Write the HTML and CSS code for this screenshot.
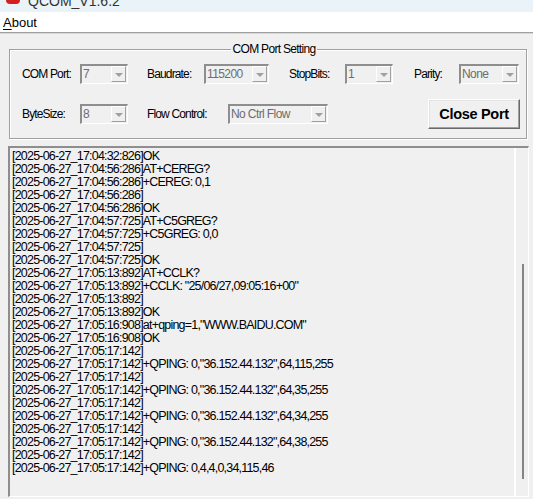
FILE: index.html
```html
<!DOCTYPE html>
<html lang="en">
<head>
    <meta charset="UTF-8">
    <title>QCOM_V1.6.2</title>
    <link rel="stylesheet" href="styles.css">
</head>
<body>
    <div class="titlebar">
        <span class="app-icon"></span>
        <span class="title-text">QCOM_V1.6.2</span>
    </div>
    <div class="menubar">
        <span class="menu-item"><u>A</u>bout</span>
    </div>

    <fieldset class="group">
        <legend>COM Port Setting</legend>
        <div class="row row-one">
            <span class="lbl lbl-port">COM Port:</span>
            <div class="combo w48"><span class="val">7</span><span class="drop"></span></div>
            <span class="lbl lbl-baud">Baudrate:</span>
            <div class="combo w65"><span class="val">115200</span><span class="drop"></span></div>
            <span class="lbl lbl-stop">StopBits:</span>
            <div class="combo w48"><span class="val">1</span><span class="drop"></span></div>
            <span class="lbl lbl-parity">Parity:</span>
            <div class="combo w60"><span class="val">None</span><span class="drop"></span></div>
        </div>
        <div class="row row-two">
            <span class="lbl lbl-port">ByteSize:</span>
            <div class="combo w48"><span class="val">8</span><span class="drop"></span></div>
            <span class="lbl lbl-flow">Flow Control:</span>
            <div class="combo w100"><span class="val">No Ctrl Flow</span><span class="drop"></span></div>
            <button class="port-btn">Close Port</button>
        </div>
    </fieldset>

    <div class="log">
        <div class="log-text" id="logText"></div>
        <div class="scroll">
            <div class="thumb"></div>
        </div>
    </div>

    <script>
        const lines = [
            '[2025-06-27_17:04:32:826]OK',
            '[2025-06-27_17:04:56:286]AT+CEREG?',
            '[2025-06-27_17:04:56:286]+CEREG: 0,1',
            '[2025-06-27_17:04:56:286]',
            '[2025-06-27_17:04:56:286]OK',
            '[2025-06-27_17:04:57:725]AT+C5GREG?',
            '[2025-06-27_17:04:57:725]+C5GREG: 0,0',
            '[2025-06-27_17:04:57:725]',
            '[2025-06-27_17:04:57:725]OK',
            '[2025-06-27_17:05:13:892]AT+CCLK?',
            '[2025-06-27_17:05:13:892]+CCLK: "25/06/27,09:05:16+00"',
            '[2025-06-27_17:05:13:892]',
            '[2025-06-27_17:05:13:892]OK',
            '[2025-06-27_17:05:16:908]at+qping=1,"WWW.BAIDU.COM"',
            '[2025-06-27_17:05:16:908]OK',
            '[2025-06-27_17:05:17:142]',
            '[2025-06-27_17:05:17:142]+QPING: 0,"36.152.44.132",64,115,255',
            '[2025-06-27_17:05:17:142]',
            '[2025-06-27_17:05:17:142]+QPING: 0,"36.152.44.132",64,35,255',
            '[2025-06-27_17:05:17:142]',
            '[2025-06-27_17:05:17:142]+QPING: 0,"36.152.44.132",64,34,255',
            '[2025-06-27_17:05:17:142]',
            '[2025-06-27_17:05:17:142]+QPING: 0,"36.152.44.132",64,38,255',
            '[2025-06-27_17:05:17:142]',
            '[2025-06-27_17:05:17:142]+QPING: 0,4,4,0,34,115,46'
        ];

        const logText = document.getElementById('logText');
        lines.forEach(line => {
            const row = document.createElement('div');
            row.className = 'line';
            row.textContent = line;
            logText.appendChild(row);
        });
    </script>
</body>
</html>
```

FILE: styles.css
```css
body {
    margin: 0;
    background-color: #f0f0f0;
    font-family: "Liberation Sans", Arial, sans-serif;
    color: #000;
    width: 533px;
    height: 499px;
    overflow: hidden;
}

.titlebar {
    height: 12px;
    background-color: #eaf3f7;
    overflow: hidden;
    display: flex;
    align-items: flex-start;
    padding-left: 6px;
    gap: 8px;
}

.app-icon {
    width: 14px;
    height: 4px;
    background-color: #d42020;
    border-radius: 0 0 4px 4px;
}

.title-text {
    font-size: 14px;
    line-height: 14px;
    margin-top: -6px;
    color: #333;
}

.menubar {
    height: 20px;
    background-color: #fff;
    border-bottom: 1px solid #a0a0a0;
    box-shadow: 0 1px 0 #d8d8d8;
    display: flex;
    align-items: center;
}

.menu-item {
    font-size: 13px;
    padding-left: 3px;
    color: #000;
}

.menu-item u {
    text-decoration-thickness: 1px;
    text-underline-offset: 2px;
}

.group {
    margin: 9px 6px 0 9px;
    padding: 8px 0 0 12px;
    border: 1px solid #a0a0a0;
    box-shadow: 1px 1px 0 #fff, inset 1px 1px 0 #fff;
    height: 87px;
}

.group legend {
    margin: 0 auto;
    padding: 0 2px;
    font-size: 12px;
    letter-spacing: -0.7px;
    line-height: 14px;
}

.row {
    display: flex;
    align-items: center;
    font-size: 12px;
}

.row-one {
    height: 20px;
}

.row-two {
    height: 30px;
    margin-top: 15px;
}

.lbl {
    white-space: nowrap;
    letter-spacing: -0.85px;
}

.lbl-port {
    width: 58px;
}

.lbl-baud {
    width: 57px;
    margin-left: 19px;
}

.lbl-stop {
    width: 56px;
    margin-left: 20px;
}

.lbl-parity {
    width: 45px;
    margin-left: 21px;
}

.lbl-flow {
    width: 81px;
    margin-left: 19px;
}

.combo {
    box-sizing: border-box;
    height: 20px;
    display: flex;
    align-items: stretch;
    border-top: 2px solid #8e8e8e;
    border-left: 2px solid #8e8e8e;
    border-right: 1px solid #fff;
    border-bottom: 1px solid #fff;
    background-color: #f0f0f0;
}

.w48 { width: 48px; }
.w60 { width: 60px; }
.w65 { width: 65px; }
.w100 { width: 100px; }

.val {
    flex: 1;
    color: #6d6d6d;
    padding-left: 1px;
    line-height: 17px;
    letter-spacing: -0.6px;
    white-space: nowrap;
    overflow: hidden;
}

.drop {
    width: 15px;
    margin: 0 1px 1px 0;
    box-sizing: border-box;
    border: 1px solid #fff;
    border-right-color: #a0a0a0;
    border-bottom-color: #a0a0a0;
    display: flex;
    align-items: center;
    justify-content: center;
}

.drop::after {
    content: "";
    border-left: 4px solid transparent;
    border-right: 4px solid transparent;
    border-top: 4px solid #a0a0a0;
    margin-top: 1px;
}

.port-btn {
    margin-left: 100px;
    width: 92px;
    height: 30px;
    font-family: "Liberation Sans", Arial, sans-serif;
    font-weight: bold;
    font-size: 14.5px;
    letter-spacing: -0.3px;
    color: #000;
    background-color: #f0f0f0;
    border: 1px solid #fff;
    border-right-color: #696969;
    border-bottom-color: #696969;
    box-shadow: inset -1px -1px 0 #a0a0a0, inset 1px 1px 0 #e3e3e3;
    padding: 0 0 1px;
}

.log {
    margin: 7px 4px 0 8px;
    height: 351px;
    box-sizing: border-box;
    border-top: 2px solid #8e8e8e;
    border-left: 2px solid #8e8e8e;
    border-right: 1px solid #fff;
    border-bottom: 1px solid #fff;
    display: flex;
}

.log-text {
    flex: 1;
    padding: 2px 0 0 2px;
    font-size: 12.5px;
    letter-spacing: -0.8px;
    line-height: 13px;
    white-space: pre;
    overflow: hidden;
}

.scroll {
    width: 12px;
    border-left: 2px solid #fff;
    padding-top: 116px;
}

.thumb {
    width: 2px;
    height: 215px;
    margin-left: 6px;
    background-color: #858585;
}
```
